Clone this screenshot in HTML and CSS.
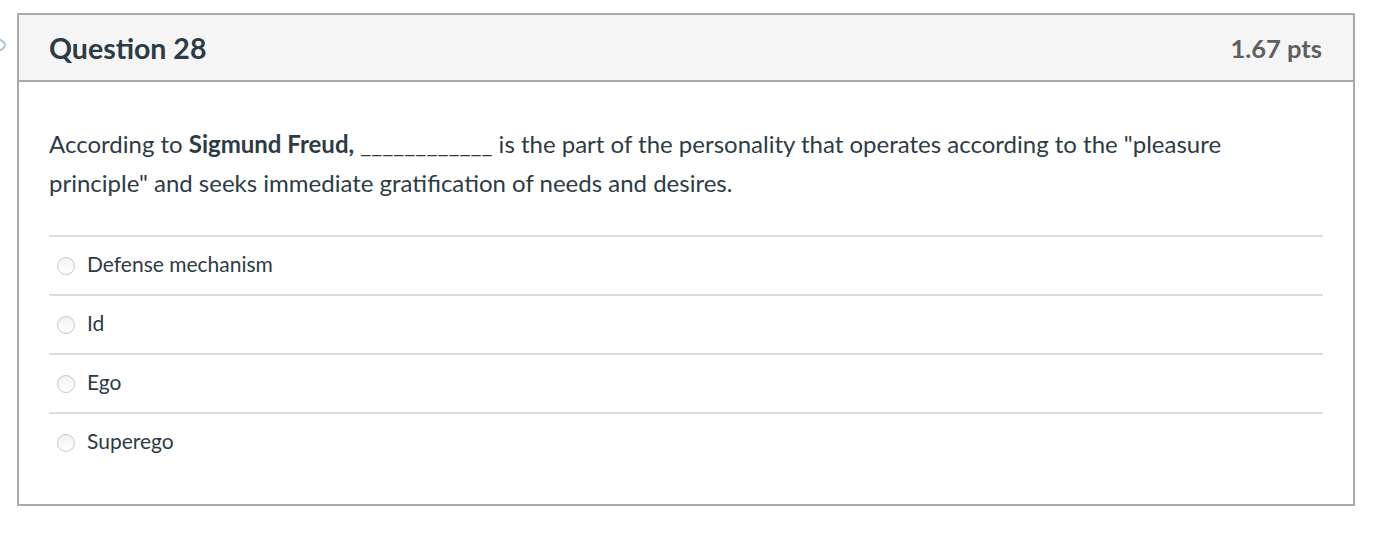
FILE: index.html
```html
<!DOCTYPE html>
<html>
<head>
<meta charset="utf-8">
<link rel="stylesheet" href="styles.css">
</head>
<body>
<div class="page">
  <svg class="nav-arrow" width="8" height="16" viewBox="0 0 8 16"><path d="M0 2 C4 4 6 6 6 8 C6 10 4 12 0 14" fill="none" stroke="#a9c3dc" stroke-width="2"/></svg>
  <div class="question">
    <div class="q-header">
      <span class="q-title">Question 28</span>
      <span class="q-pts">1.67 pts</span>
    </div>
    <div class="q-body">
      <p class="q-text">According to <strong>Sigmund Freud,</strong> ____________ is the part of the personality that operates according to the "pleasure principle" and seeks immediate gratification of needs and desires.</p>
      <div class="answers">
        <label class="answer"><span class="radio"></span><span class="a-text">Defense mechanism</span></label>
        <label class="answer"><span class="radio"></span><span class="a-text">Id</span></label>
        <label class="answer"><span class="radio"></span><span class="a-text">Ego</span></label>
        <label class="answer"><span class="radio"></span><span class="a-text">Superego</span></label>
      </div>
    </div>
  </div>
</div>
</body>
</html>
```
FILE: styles.css
```css
html, body {
  margin: 0;
  padding: 0;
  background: #fff;
}
body {
  font-family: Lato, "Open Sans", sans-serif;
  color: #2d3b45;
}
.page {
  position: relative;
  padding: 13px 0 0 17px;
}
.nav-arrow {
  position: absolute;
  left: -1px;
  top: 37px;
}
.question {
  width: 1334px;
  border: 2px solid #aaaaaa;
}
.q-header {
  display: flex;
  justify-content: space-between;
  align-items: center;
  height: 65px;
  padding: 0 31px 0 30px;
  background: #f5f5f5;
  border-bottom: 2px solid #aaaaaa;
}
.q-title {
  font-size: 28.5px;
  font-weight: 700;
  color: #2d3b45;
}
.q-pts {
  font-size: 25.5px;
  font-weight: 700;
  color: #5f5f5f;
}
.q-body {
  padding: 42px 30px 33px 30px;
}
.q-text {
  margin: 0;
  font-size: 24px;
  line-height: 39px;
  padding-right: 80px;
}
.q-text strong {
  font-weight: 700;
}
.answers {
  margin-top: 33px;
}
.answer {
  display: flex;
  align-items: center;
  height: 57px;
  border-top: 2px solid #dddddd;
  padding-left: 8px;
}
.radio {
  width: 16px;
  height: 16px;
  border-radius: 50%;
  border: 1px solid #c8c8c8;
  background: linear-gradient(#f2f2f2, #ffffff);
  margin-right: 12px;
  flex: none;
}
.a-text {
  font-size: 21px;
  color: #2d3b45;
  position: relative;
  top: -2px;
}
```
